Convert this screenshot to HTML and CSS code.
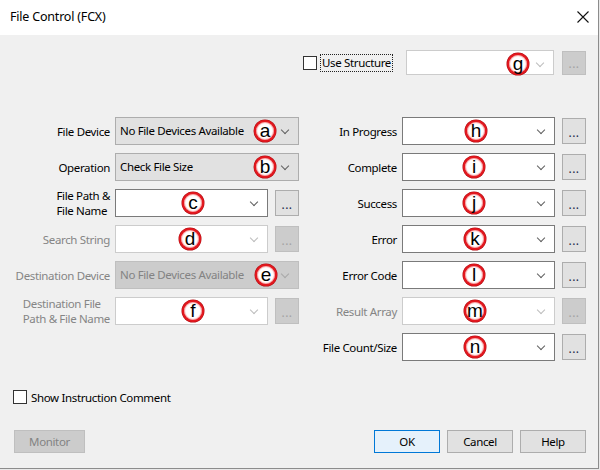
FILE: index.html
```html
<!DOCTYPE html>
<html lang="en">
  <head>
    <meta charset="UTF-8" />
    <title>File Control (FCX)</title>
    <link rel="stylesheet" href="styles.css">
  </head>
  <body>
    <div class="dialog">
      <div class="titlebar">
        <span class="title">File Control (FCX)</span>
        <svg class="close" width="12" height="12" viewBox="0 0 12 12">
          <path d="M0.5 0.5 L11.5 11.5 M11.5 0.5 L0.5 11.5" stroke="#111" stroke-width="1.1" fill="none" />
        </svg>
      </div>
      <div class="content">
        <div class="struct-row">
          <span class="check"></span>
          <span class="focus-label"><u>U</u>se Structure</span>
          <div class="combo disabled struct-combo"><span class="badge" style="left:100px">g</span></div>
          <span class="dots disabled">...</span>
        </div>

        <div class="columns">
          <div class="col left">
            <div class="row">
              <div class="label">File Device</div>
              <div class="combo list wide">No File Devices Available<span class="badge" style="left:138px">a</span></div>
            </div>
            <div class="row">
              <div class="label">Operation</div>
              <div class="combo list wide">Check File Size<span class="badge" style="left:138px">b</span></div>
            </div>
            <div class="row">
              <div class="label"><span class="lines">File Path &amp;<br>File Name</span></div>
              <div class="combo active"><span class="badge" style="left:66px">c</span></div>
              <span class="dots">...</span>
            </div>
            <div class="row off">
              <div class="label">Search String</div>
              <div class="combo disabled"><span class="badge" style="left:63px">d</span></div>
              <span class="dots disabled">...</span>
            </div>
            <div class="row off">
              <div class="label">Destination Device</div>
              <div class="combo list-off wide">No File Devices Available<span class="badge" style="left:139px">e</span></div>
            </div>
            <div class="row off">
              <div class="label"><span class="lines">Destination File<br>Path &amp; File Name</span></div>
              <div class="combo disabled"><span class="badge" style="left:66px">f</span></div>
              <span class="dots disabled">...</span>
            </div>
          </div>

          <div class="col right">
            <div class="row">
              <div class="label">In Progress</div>
              <div class="combo active"><span class="badge" style="left:62px">h</span></div>
              <span class="dots">...</span>
            </div>
            <div class="row">
              <div class="label">Complete</div>
              <div class="combo active"><span class="badge" style="left:60px">i</span></div>
              <span class="dots">...</span>
            </div>
            <div class="row">
              <div class="label">Success</div>
              <div class="combo active"><span class="badge" style="left:60px">j</span></div>
              <span class="dots">...</span>
            </div>
            <div class="row">
              <div class="label">Error</div>
              <div class="combo active"><span class="badge" style="left:61px">k</span></div>
              <span class="dots">...</span>
            </div>
            <div class="row">
              <div class="label">Error Code</div>
              <div class="combo active"><span class="badge" style="left:60px">l</span></div>
              <span class="dots">...</span>
            </div>
            <div class="row off">
              <div class="label">Result Array</div>
              <div class="combo disabled"><span class="badge" style="left:61px">m</span></div>
              <span class="dots disabled">...</span>
            </div>
            <div class="row">
              <div class="label">File Count/Size</div>
              <div class="combo active"><span class="badge" style="left:61px">n</span></div>
              <span class="dots">...</span>
            </div>
          </div>
        </div>

        <div class="comment">
          <span class="check"></span>
          <span>Show Instruction Comment</span>
        </div>

        <div class="footer">
          <button class="btn monitor">Monitor</button>
          <div class="spacer"></div>
          <button class="btn default">OK</button>
          <button class="btn">Cancel</button>
          <button class="btn">Help</button>
        </div>
      </div>
    </div>
  </body>
</html>
```

FILE: styles.css
```css
body {
  margin: 0;
  padding: 0;
  background-color: #e8e8e8;
  font-family: "Noto Sans", "Open Sans", sans-serif;
  font-size: 11.5px;
  letter-spacing: -0.35px;
  color: #000;
}
.dialog {
  width: 598px;
  height: 468px;
  background-color: #f0f0f0;
  border-right: 1px solid #8c8c8c;
  border-bottom: 1px solid #8c8c8c;
  display: flex;
  flex-direction: column;
}
.titlebar {
  height: 35px;
  background-color: #fff;
  display: flex;
  align-items: center;
  justify-content: space-between;
  padding: 0 9px 2px 10px;
  box-sizing: border-box;
}
.title {
  font-size: 12.5px;
  letter-spacing: -0.2px;
}
.content {
  flex: 1;
  padding: 15px 12px 0 0;
}

/* structure row */
.struct-row {
  height: 25px;
  display: flex;
  align-items: center;
  justify-content: flex-end;
}
.check {
  width: 12px;
  height: 12px;
  border: 1px solid #333;
  background-color: #fff;
  display: inline-block;
}
.focus-label {
  margin-left: 4px;
  padding: 0 1px;
  line-height: 16px;
  outline: 1px dotted #222;
}
.focus-label u {
  text-decoration: none;
}
.struct-combo {
  margin-left: 14px;
  width: 148px !important;
  height: 25px !important;
}
.struct-row .dots {
  margin-left: 8px;
  height: 24px;
}

/* field columns */
.columns {
  margin-top: 42px;
  display: flex;
}
.col {
  display: flex;
  flex-direction: column;
  gap: 8px;
}
.col.left {
  width: 299px;
}
.row {
  height: 28px;
  display: flex;
  align-items: center;
}
.label {
  flex-shrink: 0;
  display: flex;
  justify-content: flex-end;
  margin-right: 5px;
}
.col.left .label {
  width: 110px;
}
.col.right .label {
  width: 98px;
}
.lines {
  display: block;
  text-align: left;
  line-height: 15.5px;
}
.row.off .label {
  color: #858585;
}

/* combo boxes */
.combo {
  position: relative;
  width: 153px;
  height: 28px;
  box-sizing: border-box;
  border: 1px solid #7a7a7a;
  background-color: #fff;
  padding-left: 4px;
  line-height: 26px;
  white-space: nowrap;
}
.combo.wide {
  width: 184px;
}
.combo::after {
  content: "";
  position: absolute;
  right: 10px;
  top: 9px;
  width: 5px;
  height: 5px;
  border-right: 1px solid #606060;
  border-bottom: 1px solid #606060;
  transform: rotate(45deg);
}
.combo.list {
  background-color: #e1e1e1;
  border-color: #adadad;
}
.combo.disabled {
  border-color: #cccccc;
}
.combo.disabled::after {
  border-color: #bdbdbd;
}
.combo.list-off {
  background-color: #cccccc;
  border-color: #bfbfbf;
  color: #838383;
}
.combo.list-off::after {
  border-color: #a8a8a8;
}

/* ellipsis buttons */
.dots {
  width: 24px;
  height: 26px;
  margin-left: 7px;
  box-sizing: border-box;
  background-color: #e1e1e1;
  border: 1px solid #adadad;
  display: flex;
  justify-content: center;
  align-items: center;
  padding-top: 2px;
  font-size: 12px;
  color: #1d2a4a;
  letter-spacing: 0.5px;
}
.dots.disabled {
  background-color: #cccccc;
  border-color: #bfbfbf;
  color: #a3a3a3;
}

/* lettered callouts */
.badge {
  position: absolute;
  top: 2px;
  width: 18px;
  height: 18px;
  border: 2px solid #e3181f;
  border-radius: 50%;
  background-color: #fff;
  box-shadow: 0 0 0 0.5px #b10f14, inset 0 0 1px 1px #f7a0a0;
  font-family: "Liberation Sans", Arial, sans-serif;
  font-size: 19px;
  letter-spacing: 0;
  line-height: 17px;
  text-align: center;
  color: #000;
}

/* bottom */
.comment {
  margin-top: 28px;
  padding-left: 13px;
  display: flex;
  align-items: center;
  gap: 4px;
  height: 16px;
}
.footer {
  margin-top: 25px;
  padding-left: 14px;
  display: flex;
  gap: 7px;
}
.spacer {
  flex: 1;
}
.btn {
  height: 23px;
  width: 66px;
  box-sizing: border-box;
  border: 1px solid #adadad;
  background-color: #e1e1e1;
  font-family: inherit;
  font-size: 11.5px;
  letter-spacing: -0.35px;
  color: #000;
  padding: 0;
}
.btn.monitor {
  width: 71px;
  background-color: #cccccc;
  border-color: #bfbfbf;
  color: #838383;
}
.btn.default {
  border-color: #0078d7;
  background-color: #e5f1fb;
}
```
